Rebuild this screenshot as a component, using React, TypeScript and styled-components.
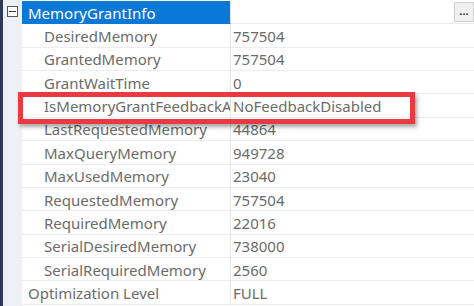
import styled, { createGlobalStyle } from "styled-components"

const GlobalStyle = createGlobalStyle`
    html, body {
        margin: 0;
        padding: 0;
        background: #ffffff;
    }
    body {
        font-family: "Noto Sans", "Open Sans", sans-serif;
    }
`

const ROW_H = 23.36

const Page = styled.div`
    position: relative;
    display: flex;
    width: 474px;
    height: 306px;
    overflow: hidden;
    background: #ffffff;
`

const Strip = styled.div`
    width: 3px;
    background: #2c3a57;
    flex: none;
`

const Grid = styled.div`
    flex: 1;
    display: flex;
    flex-direction: column;
    padding-top: 1px;
    background: linear-gradient(to right, #eef0f5 0, #eef0f5 19px, #ffffff 19px);
`

const Row = styled.div`
    display: grid;
    grid-template-columns: 19px 209px 1fr;
    height: ${ROW_H}px;
    flex: none;
`

const Gutter = styled.div`
    display: flex;
    align-items: flex-start;
    justify-content: center;
    padding-top: 5px;
    background: #eef0f5;
`

const Toggle = styled.div`
    width: 9px;
    height: 9px;
    border: 1px solid #555555;
    background: #ffffff;
    display: flex;
    align-items: center;
    justify-content: center;
    &::after {
        content: "";
        width: 7px;
        height: 1px;
        background: #333333;
    }
`

const Name = styled.div<{ $indent: number; $selected?: boolean }>`
    display: flex;
    align-items: center;
    padding-left: ${(p) => p.$indent}px;
    padding-top: 1px;
    box-sizing: border-box;
    overflow: hidden;
    white-space: nowrap;
    font-size: 15px;
    color: ${(p) => (p.$selected ? "#ffffff" : "#6b6b6b")};
    background: ${(p) => (p.$selected ? "#0a78d7" : "transparent")};
    border-bottom: 1px solid ${(p) => (p.$selected ? "#0a78d7" : "#ececec")};
    border-right: 1px solid #e4e4e4;
`

const Value = styled.div`
    display: flex;
    align-items: center;
    justify-content: space-between;
    padding-left: 2px;
    padding-top: 1px;
    box-sizing: border-box;
    overflow: hidden;
    white-space: nowrap;
    font-size: 15px;
    color: #6b6b6b;
    border-bottom: 1px solid #ececec;
`

const Ellipsis = styled.button`
    width: 20px;
    height: 20px;
    margin-bottom: 1px;
    padding: 0 0 5px;
    border: 1px solid #cfcfcf;
    background: #f1f1f1;
    font-family: "Noto Sans", sans-serif;
    font-size: 11px;
    font-weight: bold;
    line-height: 1;
    color: #333333;
    display: flex;
    align-items: flex-end;
    justify-content: center;
`

const Highlight = styled.div`
    position: absolute;
    left: 18px;
    top: 92px;
    width: 397px;
    height: 32px;
    box-sizing: border-box;
    border: 5px solid #e83a40;
    box-shadow: 2px 3px 4px rgba(0, 0, 0, 0.35);
    pointer-events: none;
`

const children: [string, string][] = [
    ["DesiredMemory", "757504"],
    ["GrantedMemory", "757504"],
    ["GrantWaitTime", "0"],
    ["IsMemoryGrantFeedbackAdjusted", "NoFeedbackDisabled"],
    ["LastRequestedMemory", "44864"],
    ["MaxQueryMemory", "949728"],
    ["MaxUsedMemory", "23040"],
    ["RequestedMemory", "757504"],
    ["RequiredMemory", "22016"],
    ["SerialDesiredMemory", "738000"],
    ["SerialRequiredMemory", "2560"],
]

const App = () => {
    return (
        <>
            <GlobalStyle />
            <Page>
                <Strip />
                <Grid>
                    <Row>
                        <Gutter>
                            <Toggle />
                        </Gutter>
                        <Name $indent={6} $selected>MemoryGrantInfo</Name>
                        <Value>
                            <span />
                            <Ellipsis>...</Ellipsis>
                        </Value>
                    </Row>
                    {children.map(([name, value]) => (
                        <Row key={name}>
                            <Gutter />
                            <Name $indent={22}>{name}</Name>
                            <Value>{value}</Value>
                        </Row>
                    ))}
                    <Row>
                        <Gutter />
                        <Name $indent={6}>Optimization Level</Name>
                        <Value>FULL</Value>
                    </Row>
                </Grid>
                <Highlight />
            </Page>
        </>
    )
}

export default App
